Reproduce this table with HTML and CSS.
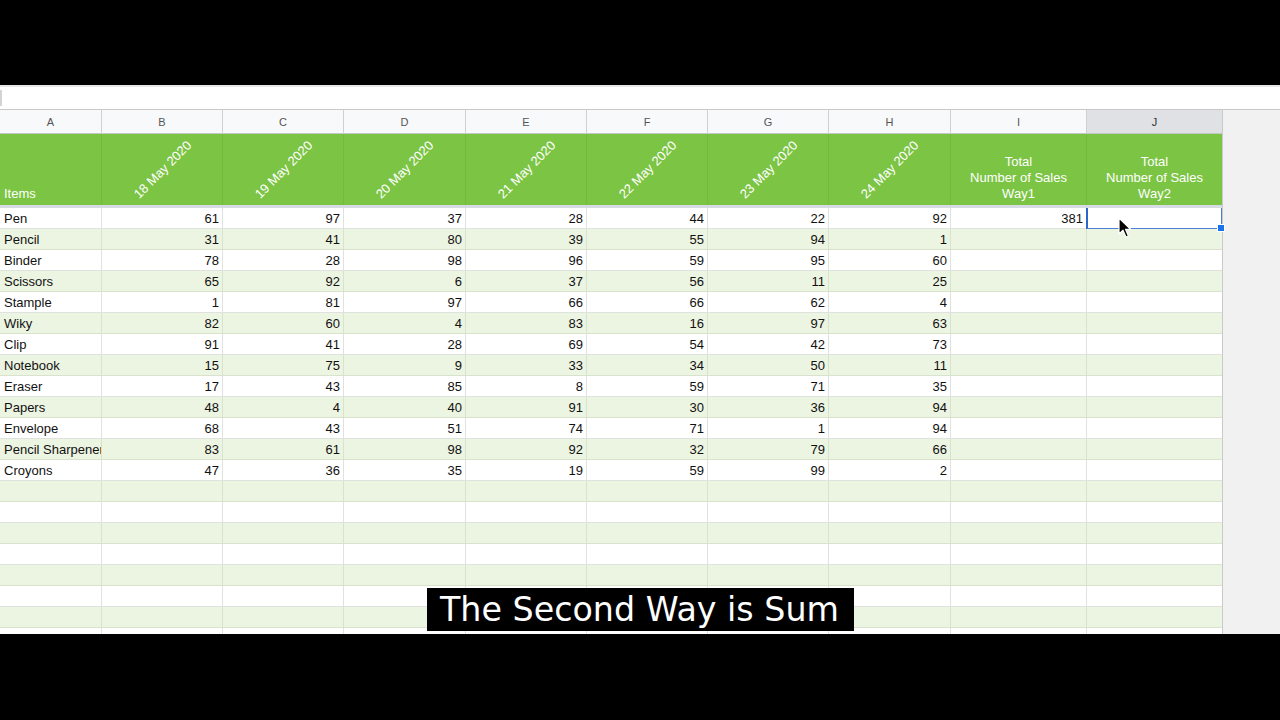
FILE: index.html
```html
<!DOCTYPE html>
<html>
<head>
<meta charset="utf-8">
<link rel="stylesheet" href="styles.css">
</head>
<body>
<div class="frame">
  <div class="bar-top"></div>
  <div class="formula"><span class="formula-mark"></span></div>
  <div class="sheet">
    <div class="grid">
      <div class="row colhead">
        <div class="ch">A</div><div class="ch">B</div><div class="ch">C</div><div class="ch">D</div><div class="ch">E</div><div class="ch">F</div><div class="ch">G</div><div class="ch">H</div><div class="ch">I</div><div class="ch sel">J</div>
      </div>
      <div class="row head">
        <div class="hc items">Items</div>
        <div class="hc date"><span>18 May 2020</span></div>
        <div class="hc date"><span>19 May 2020</span></div>
        <div class="hc date"><span>20 May 2020</span></div>
        <div class="hc date"><span>21 May 2020</span></div>
        <div class="hc date"><span>22 May 2020</span></div>
        <div class="hc date"><span>23 May 2020</span></div>
        <div class="hc date"><span>24 May 2020</span></div>
        <div class="hc total">Total<br>Number of Sales<br>Way1</div>
        <div class="hc total">Total<br>Number of Sales<br>Way2</div>
      </div>
      <div class="freeze"></div>
      <div class="body">
        <div class="row"><div class="c t">Pen</div><div class="c">61</div><div class="c">97</div><div class="c">37</div><div class="c">28</div><div class="c">44</div><div class="c">22</div><div class="c">92</div><div class="c">381</div><div class="c active"><span class="handle"></span></div></div>
        <div class="row"><div class="c t">Pencil</div><div class="c">31</div><div class="c">41</div><div class="c">80</div><div class="c">39</div><div class="c">55</div><div class="c">94</div><div class="c">1</div><div class="c"></div><div class="c"></div></div>
        <div class="row"><div class="c t">Binder</div><div class="c">78</div><div class="c">28</div><div class="c">98</div><div class="c">96</div><div class="c">59</div><div class="c">95</div><div class="c">60</div><div class="c"></div><div class="c"></div></div>
        <div class="row"><div class="c t">Scissors</div><div class="c">65</div><div class="c">92</div><div class="c">6</div><div class="c">37</div><div class="c">56</div><div class="c">11</div><div class="c">25</div><div class="c"></div><div class="c"></div></div>
        <div class="row"><div class="c t">Stample</div><div class="c">1</div><div class="c">81</div><div class="c">97</div><div class="c">66</div><div class="c">66</div><div class="c">62</div><div class="c">4</div><div class="c"></div><div class="c"></div></div>
        <div class="row"><div class="c t">Wiky</div><div class="c">82</div><div class="c">60</div><div class="c">4</div><div class="c">83</div><div class="c">16</div><div class="c">97</div><div class="c">63</div><div class="c"></div><div class="c"></div></div>
        <div class="row"><div class="c t">Clip</div><div class="c">91</div><div class="c">41</div><div class="c">28</div><div class="c">69</div><div class="c">54</div><div class="c">42</div><div class="c">73</div><div class="c"></div><div class="c"></div></div>
        <div class="row"><div class="c t">Notebook</div><div class="c">15</div><div class="c">75</div><div class="c">9</div><div class="c">33</div><div class="c">34</div><div class="c">50</div><div class="c">11</div><div class="c"></div><div class="c"></div></div>
        <div class="row"><div class="c t">Eraser</div><div class="c">17</div><div class="c">43</div><div class="c">85</div><div class="c">8</div><div class="c">59</div><div class="c">71</div><div class="c">35</div><div class="c"></div><div class="c"></div></div>
        <div class="row"><div class="c t">Papers</div><div class="c">48</div><div class="c">4</div><div class="c">40</div><div class="c">91</div><div class="c">30</div><div class="c">36</div><div class="c">94</div><div class="c"></div><div class="c"></div></div>
        <div class="row"><div class="c t">Envelope</div><div class="c">68</div><div class="c">43</div><div class="c">51</div><div class="c">74</div><div class="c">71</div><div class="c">1</div><div class="c">94</div><div class="c"></div><div class="c"></div></div>
        <div class="row"><div class="c t">Pencil Sharpener</div><div class="c">83</div><div class="c">61</div><div class="c">98</div><div class="c">92</div><div class="c">32</div><div class="c">79</div><div class="c">66</div><div class="c"></div><div class="c"></div></div>
        <div class="row"><div class="c t">Croyons</div><div class="c">47</div><div class="c">36</div><div class="c">35</div><div class="c">19</div><div class="c">59</div><div class="c">99</div><div class="c">2</div><div class="c"></div><div class="c"></div></div>
        <div class="row"><div class="c"></div><div class="c"></div><div class="c"></div><div class="c"></div><div class="c"></div><div class="c"></div><div class="c"></div><div class="c"></div><div class="c"></div><div class="c"></div></div>
        <div class="row"><div class="c"></div><div class="c"></div><div class="c"></div><div class="c"></div><div class="c"></div><div class="c"></div><div class="c"></div><div class="c"></div><div class="c"></div><div class="c"></div></div>
        <div class="row"><div class="c"></div><div class="c"></div><div class="c"></div><div class="c"></div><div class="c"></div><div class="c"></div><div class="c"></div><div class="c"></div><div class="c"></div><div class="c"></div></div>
        <div class="row"><div class="c"></div><div class="c"></div><div class="c"></div><div class="c"></div><div class="c"></div><div class="c"></div><div class="c"></div><div class="c"></div><div class="c"></div><div class="c"></div></div>
        <div class="row"><div class="c"></div><div class="c"></div><div class="c"></div><div class="c"></div><div class="c"></div><div class="c"></div><div class="c"></div><div class="c"></div><div class="c"></div><div class="c"></div></div>
        <div class="row"><div class="c"></div><div class="c"></div><div class="c"></div><div class="c"></div><div class="c"></div><div class="c"></div><div class="c"></div><div class="c"></div><div class="c"></div><div class="c"></div></div>
        <div class="row"><div class="c"></div><div class="c"></div><div class="c"></div><div class="c"></div><div class="c"></div><div class="c"></div><div class="c"></div><div class="c"></div><div class="c"></div><div class="c"></div></div>
        <div class="row"><div class="c"></div><div class="c"></div><div class="c"></div><div class="c"></div><div class="c"></div><div class="c"></div><div class="c"></div><div class="c"></div><div class="c"></div><div class="c"></div></div>
      </div>
    </div>
    <div class="side"></div>
    <svg class="cursor" width="14" height="22" viewBox="0 0 14 22"><path d="M1 1 L1 17 L5 13.2 L8 20 L10.4 19 L7.5 12.3 L12.6 12.3 Z" fill="#000" stroke="#fff" stroke-width="1.2" stroke-linejoin="round"/></svg>
    <div class="subtitle">The Second Way is Sum</div>
  </div>
  <div class="bar-bottom"></div>
</div>
</body>
</html>
```
FILE: styles.css
```css
html, body {
  margin: 0;
  padding: 0;
  background: #000;
}
.frame {
  width: 1280px;
  height: 720px;
  display: flex;
  flex-direction: column;
  background: #000;
  overflow: hidden;
}
.bar-top {
  height: 85px;
  flex: none;
}
.formula {
  height: 25px;
  flex: none;
  box-sizing: border-box;
  background: #fff;
  border-top: 2px solid #e6e6e6;
  border-bottom: 1px solid #c8c8c8;
  display: flex;
  align-items: center;
}
.formula-mark {
  width: 2px;
  height: 16px;
  background: #d4d4d4;
}
.sheet {
  height: 524px;
  flex: none;
  display: flex;
  position: relative;
  overflow: hidden;
  background: #fff;
}
.grid {
  width: 1222px;
  flex: none;
  font-family: "Liberation Sans", Arial, sans-serif;
  font-size: 13px;
  color: #111;
}
.side {
  flex: 1;
  background: #f1f1f1;
  border-left: 1px solid #c9c9c9;
}
.row {
  display: grid;
  grid-template-columns: 102px 121px 121px 122px 121px 121px 121px 122px 136px 135px;
}
.colhead {
  height: 24px;
}
.ch {
  box-sizing: border-box;
  background: #f8f9fa;
  border-right: 1px solid #d0d0d0;
  border-bottom: 1px solid #c4c7c5;
  font-size: 11px;
  color: #555;
  display: flex;
  align-items: center;
  justify-content: center;
}
.ch.sel {
  background: #dfe1e5;
  color: #333;
  border-right: none;
}
.head {
  height: 71px;
  background: #7cc444;
  color: #fff;
}
.hc {
  box-sizing: border-box;
  border-right: 1px solid #74b940;
  position: relative;
  overflow: hidden;
}
.hc:last-child {
  border-right: none;
}
.items {
  display: flex;
  align-items: flex-end;
  padding: 0 0 3px 4px;
  line-height: 16px;
}
.date {
  display: flex;
  align-items: center;
  justify-content: center;
  font-size: 13px;
  padding-left: 1px;
}
.date span {
  display: block;
  white-space: nowrap;
  transform: rotate(-45deg);
}
.total {
  display: flex;
  align-items: flex-end;
  justify-content: center;
  text-align: center;
  line-height: 16px;
  padding-bottom: 3px;
}
.freeze {
  height: 3px;
  background: #d7dbe3;
}
.body .row {
  height: 21px;
}
.body .row:nth-child(even) {
  background: #ecf4e2;
}
.c {
  box-sizing: border-box;
  border-right: 1px solid #e0e2df;
  border-bottom: 1px solid #e0e2df;
  text-align: right;
  padding: 0 3px;
  line-height: 22px;
  white-space: nowrap;
  overflow: hidden;
}
.c:last-child {
  border-right: none;
}
.body .row:nth-child(even) .c {
  border-color: #d8e2cd;
}
.c.t {
  text-align: left;
  padding-left: 4px;
  padding-right: 0;
  overflow: hidden;
}
.c.active {
  position: relative;
  overflow: visible;
  border-left: 2px solid #2a67c9;
  border-right: 1px solid #4a7fd6;
  border-bottom: 1px solid #4a7fd6;
  margin-left: -1px;
}
.handle {
  position: absolute;
  right: -4px;
  bottom: -4px;
  width: 6px;
  height: 6px;
  background: #1a73e8;
  border: 1px solid #fff;
  z-index: 2;
}
.cursor {
  position: absolute;
  left: 1118px;
  top: 107px;
  z-index: 5;
}
.subtitle {
  position: absolute;
  left: 427px;
  top: 478px;
  height: 43px;
  box-sizing: border-box;
  padding: 0 15px 0 13px;
  background: #000;
  color: #fff;
  font-family: "DejaVu Sans", Verdana, sans-serif;
  font-size: 33.3px;
  line-height: 43px;
  white-space: nowrap;
  z-index: 6;
}
.bar-bottom {
  flex: 1;
}
```
